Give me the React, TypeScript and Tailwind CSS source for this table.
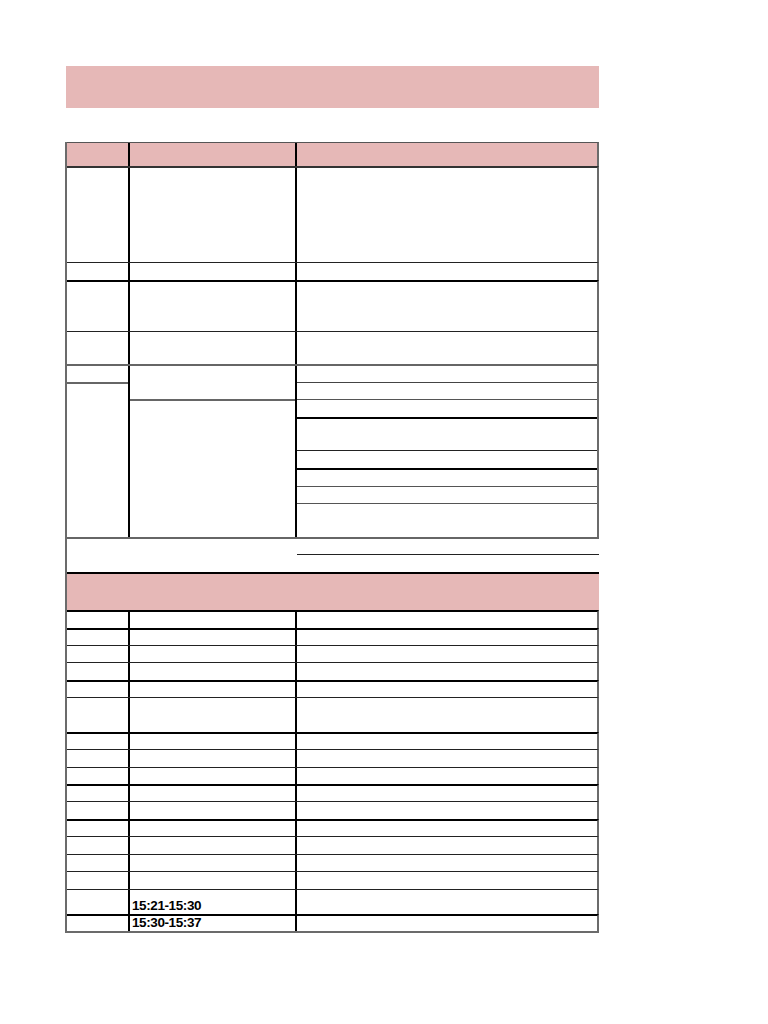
type Row = { h: string; line: string; text?: string };

const PINK = "bg-[#e6b8b7]";

// bottom schedule rows, top line of each row is its own border
const scheduleRows: Row[] = [
  { h: "h-[18px]", line: "border-t-2 border-black" },
  { h: "h-[17px]", line: "border-t-2 border-black" },
  { h: "h-[17px]", line: "border-t border-[#222]" },
  { h: "h-[18px]", line: "border-t border-[#222]" },
  { h: "h-[17px]", line: "border-t-2 border-black" },
  { h: "h-[35px]", line: "border-t border-[#222]" },
  { h: "h-[17px]", line: "border-t-2 border-black" },
  { h: "h-[18px]", line: "border-t border-[#222]" },
  { h: "h-[17px]", line: "border-t border-[#222]" },
  { h: "h-[17px]", line: "border-t-2 border-black" },
  { h: "h-[18px]", line: "border-t border-[#222]" },
  { h: "h-[17px]", line: "border-t-2 border-black" },
  { h: "h-[18px]", line: "border-t border-[#222]" },
  { h: "h-[17px]", line: "border-t border-[#222]" },
  { h: "h-[18px]", line: "border-t border-[#222]" },
  { h: "h-[25px]", line: "border-t border-[#222]", text: "15:21-15:30" },
  { h: "h-[17px]", line: "border-t-2 border-black", text: "15:30-15:37" },
];

// right column of the merged block
const splitCells: Row[] = [
  { h: "h-[17px]", line: "border-t border-[#444]" },
  { h: "h-[18px]", line: "border-t border-[#555]" },
  { h: "h-[33px]", line: "border-t-2 border-black" },
  { h: "h-[18px]", line: "border-t border-[#222]" },
  { h: "h-[18px]", line: "border-t-2 border-black" },
  { h: "h-[17px]", line: "border-t border-[#555]" },
  { h: "h-[34px]", line: "border-t border-[#555]" },
];

function ThreeCol({ h, line, text, bg }: Row & { bg?: string }) {
  return (
    <div className={`flex border-r-2 border-r-[#6b6b6b] ${h} ${line} ${bg ?? ""}`}>
      <div className="w-[63px] shrink-0 border-r-2 border-black" />
      <div className="flex w-[167px] shrink-0 items-end overflow-hidden border-r-2 border-black pb-[1px] pl-[2px]">
        {text && (
          <span className="text-[13.5px] font-bold leading-[15px] tracking-[-0.4px] text-black">
            {text}
          </span>
        )}
      </div>
      <div className="flex-1" />
    </div>
  );
}

export default function App() {
  return (
    <div className="min-h-[1024px] bg-white pb-[90px] font-['Liberation_Sans',Arial,sans-serif]">
      <div className="ml-[66px] pt-[66px]">
        <div className={`h-[42px] w-[533px] ${PINK}`} />
      </div>

      <div className="ml-[65px] mt-[34px] w-[534px] border-l-2 border-[#6b6b6b]">
        {/* header */}
        <ThreeCol h="h-[24px]" line="border-t border-[#555]" bg={PINK} />
        <ThreeCol h="h-[96px]" line="border-t-2 border-[#333]" />
        <ThreeCol h="h-[18px]" line="border-t border-[#222]" />
        <ThreeCol h="h-[51px]" line="border-t-2 border-black" />
        <ThreeCol h="h-[33px]" line="border-t border-[#222]" />

        {/* merged block */}
        <div className="flex h-[173px] border-r-2 border-t-2 border-r-[#6b6b6b] border-t-[#666]">
          <div className="flex w-[63px] shrink-0 flex-col border-r-2 border-black">
            <div className="h-[16px]" />
            <div className="flex-1 border-t-2 border-[#666]" />
          </div>
          <div className="flex w-[167px] shrink-0 flex-col border-r-2 border-black">
            <div className="h-[33px]" />
            <div className="flex-1 border-t-2 border-[#666]" />
          </div>
          <div className="flex flex-1 flex-col">
            <div className="h-[16px]" />
            {splitCells.map((c, i) => (
              <div key={i} className={`${c.h} ${c.line}`} />
            ))}
          </div>
        </div>

        {/* open row with a single rule */}
        <div className="flex h-[35px] border-t-2 border-[#666]">
          <div className="w-[230px] shrink-0" />
          <div className="h-[16px] flex-1 border-b border-[#222]" />
        </div>

        {/* section band */}
        <div className={`h-[38px] border-t-2 border-black ${PINK}`} />

        {scheduleRows.map((r, i) => (
          <ThreeCol key={i} {...r} />
        ))}
        <div className="h-[2px] border-r-2 border-[#6b6b6b] bg-[#6b6b6b]" />
      </div>
    </div>
  );
}
